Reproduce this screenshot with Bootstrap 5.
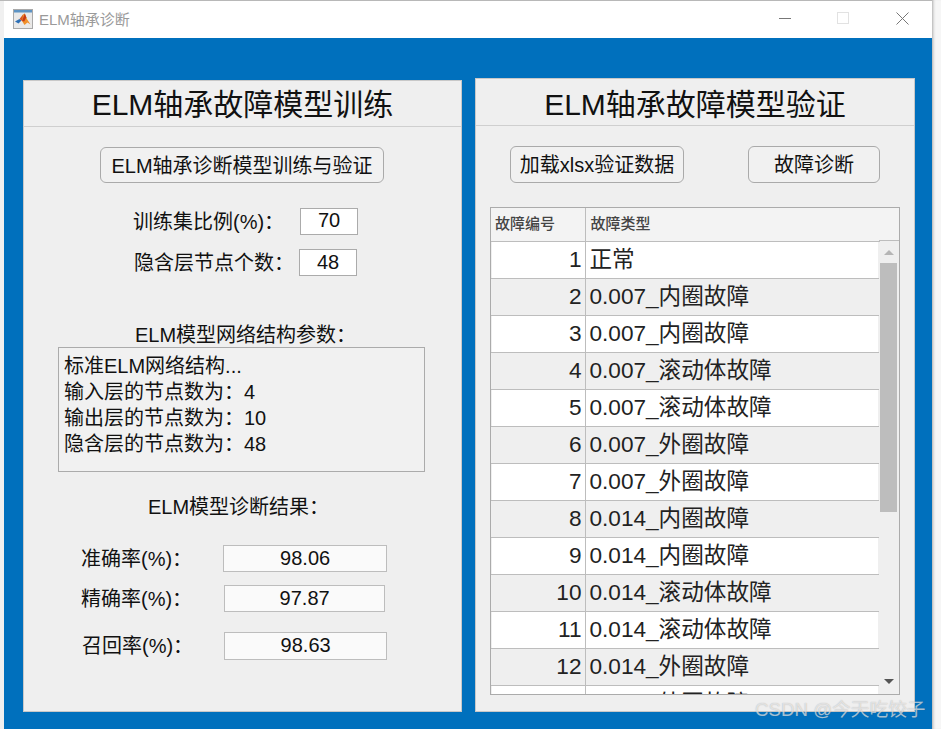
<!DOCTYPE html>
<html lang="zh-CN">
<head>
<meta charset="utf-8">
<title>ELM轴承诊断</title>
<link href="https://cdn.jsdelivr.net/npm/bootstrap@5.3.0/dist/css/bootstrap.min.css" rel="stylesheet">
<style>
html,body{margin:0;height:100%;overflow:hidden;background:#f0f0f0;}
body{font-family:"Liberation Sans","Noto Sans CJK SC",sans-serif;color:#111;font-size:20px;}
.scene{width:941px;height:729px;position:relative;overflow:hidden;}
.app-win{margin-left:4px;width:928px;height:728px;margin-top:1px;background:#0070bd;}
.right-edge{position:absolute;left:932px;top:0;width:9px;height:729px;background:#f6f6f6;box-shadow:inset 3px 0 3px -2px #aaa;}
.top-edge{position:absolute;left:0;top:0;width:941px;height:1px;background:#b8b8b8;}
.title-strip{height:37px;background:#fff;}
.title-logo{width:20px;height:20px;margin-left:9px;margin-top:-1px;}
.title-text{font-size:15px;color:#9a9a9a;margin-left:6px;line-height:20px;}
.win-ctrl{position:absolute;top:12px;}
.win-min{left:779px;}
.win-max{left:837px;}
.win-close{left:896px;}
.stage{padding-left:19px;gap:13px;}
.side{background:#efefef;border:1px solid #c8c8c8;}
.side-l{width:439px;margin-top:42px;height:632px;}
.side-r{width:440px;margin-top:40px;height:634px;}
.side-title{height:45px;line-height:48px;font-size:30px;text-align:center;border-bottom:1px solid #cfcfcf;color:#111;box-sizing:content-box;}
.side-r .side-title{height:46px;line-height:51px;}
.gui-btn{display:block;height:37px;padding:0;font-size:20px;line-height:37px;color:#111;background:#f1f1f1;border:1px solid #aaa;border-radius:6px;text-align:center;}
.btn-train{width:284px;height:36px;margin:20px 0 0 76px;}
.btn-load{width:174px;}
.btn-diag{width:132px;margin-left:64px;}
.btn-bar{margin:20px 0 0 34px;}
.lbl{line-height:26px;white-space:nowrap;}
.field{display:block;height:27px;line-height:25px;text-align:center;background:#fafafa;border:1px solid #bdbdbd;font-size:20px;color:#111;}
.f-white{background:#fff;border-color:#ababab;}
.r1{margin:25px 0 0 109px;}
.r1 .field{width:58px;margin-left:16px;line-height:23px;}
.r2{margin:14px 0 0 110px;}
.r2 .field{width:58px;margin-left:5px;}
.cap-a{margin-top:45px;height:26px;line-height:28px;text-align:center;padding-left:6px;}
.log-box{margin-left:34px;width:367px;height:125px;border:1px solid #ababab;background:#f1f1f1;padding:5px 0 0 5px;line-height:26px;}
.cap-b{margin-top:22px;text-align:center;padding-right:8px;}
.m1{margin:25px 0 0 57px;}
.m1 .field{width:164px;margin-left:31px;}
.m2{margin:13px 0 0 57px;}
.m2 .field{width:161px;margin-left:32px;}
.m3{margin:20px 0 0 58px;}
.m3 .field{width:163px;height:28px;margin-left:31px;}
.grid-wrap{position:relative;margin:24px 0 0 14px;width:410px;height:488px;border:1px solid #ababab;overflow:hidden;background:#efefef;}
.tbl{width:388px;border-collapse:collapse;table-layout:fixed;margin:0;}
.tbl th{height:33px;padding:0 0 0 4px;font-size:15px;font-weight:500;color:#444;background:#f3f3f3;border-right:1px solid #bdbdbd;border-bottom:1px solid #bdbdbd;line-height:20px;}
.tbl th+th{padding-left:5px;}
.tbl td{height:37px;padding:0 4px;font-size:22.6px;line-height:34px;color:#222;border-bottom:1px solid #bdbdbd;background:#fff;white-space:nowrap;}
.tbl td.num{border-right:1px solid #bdbdbd;text-align:right;padding-right:3px;box-shadow:inset 1px 0 0 #efefef;}
.tbl td+td{box-shadow:inset -1px 0 0 #efefef;}
.tbl tr.alt td{background:#efefef;}
.tbl .c1{width:94px;}
.tbl .c2{width:294px;}
.head-end{position:absolute;left:388px;top:0;width:20px;height:33px;background:#f3f3f3;border-bottom:1px solid #bdbdbd;}
.sbar{position:absolute;left:388px;top:34px;width:20px;height:452px;background:#efefef;}
.sbar-thumb{position:absolute;left:1px;top:21px;width:17px;height:249px;background:#bdbdbd;}
.sbar-up,.sbar-dn{position:absolute;left:5px;width:0;height:0;border-left:5px solid transparent;border-right:5px solid transparent;}
.sbar-up{top:8px;border-bottom:5px solid #b5b5b5;}
.sbar-dn{top:437px;border-top:5px solid #555;}
.wmark{position:absolute;left:755px;top:698px;font-size:18.7px;line-height:24px;color:rgba(255,255,255,.6);text-shadow:0 0 1px rgba(90,90,90,.45);white-space:nowrap;}
</style>
</head>
<body>
<div class="scene">
  <div class="top-edge"></div>
  <div class="right-edge"></div>
  <div class="app-win d-flex flex-column">
    <div class="title-strip d-flex align-items-center">
      <svg class="title-logo" viewBox="0 0 20 20" aria-hidden="true">
        <rect x="0.5" y="0.5" width="19" height="19" fill="#e9e9e9" stroke="#a9a9a9"/>
        <rect x="1" y="1" width="18" height="2.5" fill="#5d93c4"/>
        <path d="M2 12.5 L6.5 10 L8.5 11.5 L5.5 14.5 Z" fill="#2c6fb5"/>
        <path d="M6.5 10 L10 5.5 L12 7 L9 12 L8.5 11.5 Z" fill="#d9541e"/>
        <path d="M10 5.5 L11.8 4.5 L14 10 L17.5 15.5 L14.5 13.5 L11.5 16 L9 12 Z" fill="#f0902a"/>
        <path d="M11.8 4.5 L13.3 8.5 L11.2 12.5 L9 12 Z" fill="#c63a17"/>
      </svg>
      <span class="title-text">ELM轴承诊断</span>
      <svg class="win-ctrl win-min" width="13" height="13" viewBox="0 0 13 13" aria-hidden="true"><path d="M0 6.5H12" stroke="#777" stroke-width="1"/></svg>
      <svg class="win-ctrl win-max" width="13" height="13" viewBox="0 0 13 13" aria-hidden="true"><rect x="0.5" y="0.5" width="11" height="11" fill="none" stroke="#e2e2e2"/></svg>
      <svg class="win-ctrl win-close" width="13" height="13" viewBox="0 0 13 13" aria-hidden="true"><path d="M0.5 0.5L12.5 12.5M12.5 0.5L0.5 12.5" stroke="#777" stroke-width="1"/></svg>
    </div>
    <div class="stage d-flex flex-grow-1 align-items-start">
      <section class="side side-l">
        <div class="side-title">ELM轴承故障模型训练</div>
        <div class="gui-btn btn-train">ELM轴承诊断模型训练与验证</div>
        <div class="r1 d-flex align-items-center"><span class="lbl">训练集比例(%)：</span><span class="field f-white">70</span></div>
        <div class="r2 d-flex align-items-center"><span class="lbl">隐含层节点个数：</span><span class="field f-white">48</span></div>
        <div class="lbl cap-a">ELM模型网络结构参数：</div>
        <div class="log-box">标准ELM网络结构...<br>输入层的节点数为：4<br>输出层的节点数为：10<br>隐含层的节点数为：48</div>
        <div class="lbl cap-b">ELM模型诊断结果：</div>
        <div class="m1 d-flex align-items-center"><span class="lbl">准确率(%)：</span><span class="field">98.06</span></div>
        <div class="m2 d-flex align-items-center"><span class="lbl">精确率(%)：</span><span class="field">97.87</span></div>
        <div class="m3 d-flex align-items-center"><span class="lbl">召回率(%)：</span><span class="field">98.63</span></div>
      </section>
      <section class="side side-r">
        <div class="side-title">ELM轴承故障模型验证</div>
        <div class="btn-bar d-flex">
          <div class="gui-btn btn-load">加载xlsx验证数据</div>
          <div class="gui-btn btn-diag">故障诊断</div>
        </div>
        <div class="grid-wrap">
          <table class="tbl">
            <thead><tr><th class="c1">故障编号</th><th class="c2">故障类型</th></tr></thead>
            <tbody>
              <tr><td class="num">1</td><td>正常</td></tr>
              <tr class="alt"><td class="num">2</td><td>0.007_内圈故障</td></tr>
              <tr><td class="num">3</td><td>0.007_内圈故障</td></tr>
              <tr class="alt"><td class="num">4</td><td>0.007_滚动体故障</td></tr>
              <tr><td class="num">5</td><td>0.007_滚动体故障</td></tr>
              <tr class="alt"><td class="num">6</td><td>0.007_外圈故障</td></tr>
              <tr><td class="num">7</td><td>0.007_外圈故障</td></tr>
              <tr class="alt"><td class="num">8</td><td>0.014_内圈故障</td></tr>
              <tr><td class="num">9</td><td>0.014_内圈故障</td></tr>
              <tr class="alt"><td class="num">10</td><td>0.014_滚动体故障</td></tr>
              <tr><td class="num">11</td><td>0.014_滚动体故障</td></tr>
              <tr class="alt"><td class="num">12</td><td>0.014_外圈故障</td></tr>
              <tr><td class="num">13</td><td>0.014_外圈故障</td></tr>
            </tbody>
          </table>
          <div class="head-end"></div>
          <div class="sbar"><div class="sbar-up"></div><div class="sbar-thumb"></div><div class="sbar-dn"></div></div>
        </div>
      </section>
    </div>
  </div>
  <div class="wmark">CSDN @今天吃饺子</div>
</div>
<script src="https://cdn.jsdelivr.net/npm/bootstrap@5.3.0/dist/js/bootstrap.bundle.min.js"></script>
</body>
</html>
